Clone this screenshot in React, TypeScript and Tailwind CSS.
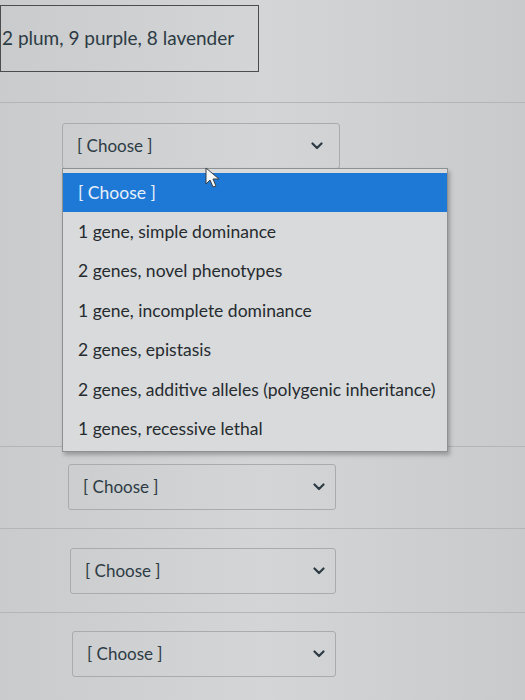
const options = [
  "[ Choose ]",
  "1 gene, simple dominance",
  "2 genes, novel phenotypes",
  "1 gene, incomplete dominance",
  "2 genes, epistasis",
  "2 genes, additive alleles (polygenic inheritance)",
  "1 genes, recessive lethal",
];

function Chevron() {
  return (
    <svg width="12" height="8" viewBox="0 0 12 8" aria-hidden="true" className="text-[#2d3b45]">
      <polyline points="1.5,1.5 6,6 10.5,1.5" fill="none" stroke="currentColor" strokeWidth="2.2" strokeLinecap="round" strokeLinejoin="round" />
    </svg>
  );
}

function Select({ className }: { className: string }) {
  return (
    <div
      className={`flex h-[46px] items-center justify-between rounded-[3px] border border-[#a9abac] pl-[14px] text-[17px] text-[#2d3b45] ${className}`}
    >
      <span>[ Choose ]</span>
      <Chevron />
    </div>
  );
}

export default function App() {
  return (
    <div
      className="relative h-[700px] w-[525px] overflow-hidden bg-gradient-to-r from-[#c9cbcc] via-[#d3d5d6] to-[#c8cacb] text-[#2d3b45]"
      style={{ fontFamily: "Lato, 'Open Sans', sans-serif" }}
    >
      {/* answer box carried over from the previous question */}
      <div className="mt-[5px] flex h-[67px] w-[259px] items-center border border-[#4a4d50] pl-[1px] text-[19px]">
        2 plum, 9 purple, 8 lavender
      </div>

      <div className="mt-[30px] border-t border-[#b3b5b6]" />

      {/* open select */}
      <div className="relative ml-[62px] mt-[20px] w-[278px]">
        <Select className="pr-[16px]" />

        <div className="absolute left-0 top-[45px] z-10 w-[386px] border border-[#8e9193] bg-[#d8dadb] pb-[2px] pt-[4px] shadow-[2px_3px_4px_rgba(0,0,0,0.25)]">
          {options.map((o, i) => (
            <div
              key={o}
              className={`flex h-[39.4px] items-center pl-[15px] text-[17.5px] ${
                i === 0 ? "bg-[#1e79d6] text-[#e8f0fa]" : "text-[#262b30]"
              }`}
            >
              {o}
            </div>
          ))}
        </div>

        {/* mouse pointer */}
        <svg
          width="16"
          height="22"
          viewBox="0 0 16 22"
          aria-hidden="true"
          className="absolute left-[143px] top-[44px] z-20"
        >
          <path d="M1 1 L1 17 L5 13 L8 20 L11 19 L8 12 L14 12 Z" fill="#f4f6f8" stroke="#3a3f44" strokeWidth="1" strokeLinejoin="round" />
        </svg>
      </div>

      <div className="mt-[277px] border-t border-[#b3b5b6]" />
      <Select className="ml-[68px] mt-[17px] w-[268px] pr-[10px]" />

      <div className="mt-[18px] border-t border-[#b3b5b6]" />
      <Select className="ml-[70px] mt-[19px] w-[266px] pr-[10px]" />

      <div className="mt-[18px] border-t border-[#b3b5b6]" />
      <Select className="ml-[72px] mt-[18px] w-[264px] pr-[10px]" />
    </div>
  );
}
